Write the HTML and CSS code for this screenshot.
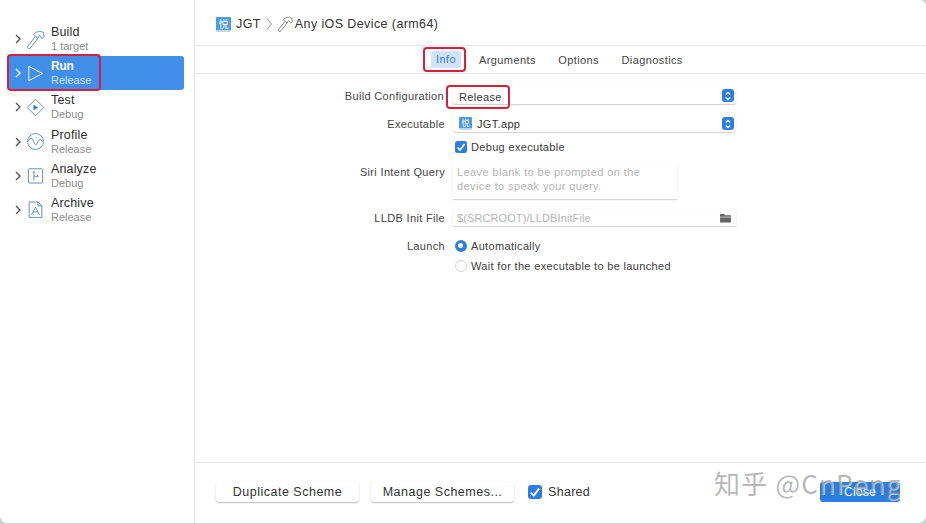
FILE: index.html
```html
<!DOCTYPE html>
<html lang="en">
<head>
<meta charset="utf-8">
<title>Scheme editor</title>
<link rel="stylesheet" href="styles.css">
</head>
<body>
<div class="sheet">
  <aside class="sidebar">
    <div class="action">
      <svg class="chev" viewBox="0 0 8 10"><path d="M2 1l4 4-4 4"/></svg>
      <svg class="aicon" viewBox="0 0 24 24"><path class="ln" d="M2 21l10-13 3 2.500L5 23.300c-1.500.7-3.500-.7-3-2.300z"/><path class="ln" d="M12 8L9.500 5.500C13 1.500 18 1 22 3l1 5.500-2.500 1.800-3.500-3.300-2 3.500"/></svg>
      <div class="atext"><div class="aname">Build</div><div class="asub">1 target</div></div>
    </div>
    <div class="action selected">
      <svg class="chev" viewBox="0 0 8 10"><path d="M2 1l4 4-4 4"/></svg>
      <svg class="aicon" viewBox="0 0 24 24"><path class="ln" d="M3.500 3L21 12 3.500 21z"/></svg>
      <div class="atext"><div class="aname">Run</div><div class="asub">Release</div></div>
    </div>
    <div class="action">
      <svg class="chev" viewBox="0 0 8 10"><path d="M2 1l4 4-4 4"/></svg>
      <svg class="aicon" viewBox="0 0 24 24"><path class="ln" d="M12 1.500L22.500 12 12 22.500 1.500 12z"/><path class="fillb" d="M9.500 8.500l6 3.500-6 3.500z"/></svg>
      <div class="atext"><div class="aname">Test</div><div class="asub">Debug</div></div>
    </div>
    <div class="action">
      <svg class="chev" viewBox="0 0 8 10"><path d="M2 1l4 4-4 4"/></svg>
      <svg class="aicon" viewBox="0 0 24 24"><circle class="ln" cx="12" cy="12" r="10"/><path class="ln" d="M2.500 12c2-3 3.500-5 5-4s2.500 7 4.500 8 3-5 4.500-6 3 .5 5 2"/></svg>
      <div class="atext"><div class="aname">Profile</div><div class="asub">Release</div></div>
    </div>
    <div class="action">
      <svg class="chev" viewBox="0 0 8 10"><path d="M2 1l4 4-4 4"/></svg>
      <svg class="aicon" viewBox="0 0 24 24"><rect class="ln" x="3" y="3.500" width="18" height="18" rx="1"/><path class="ln" d="M10 7v11M10 13h5M8.500 8.500L10 7l1.500 1.500M14 11.500l1.500 1.500-1.500 1.500"/></svg>
      <div class="atext"><div class="aname">Analyze</div><div class="asub">Debug</div></div>
    </div>
    <div class="action">
      <svg class="chev" viewBox="0 0 8 10"><path d="M2 1l4 4-4 4"/></svg>
      <svg class="aicon" viewBox="0 0 24 24"><path class="ln" d="M4 2.500h11l5 5v14.500H4z"/><path class="ln" d="M15 2.500v5h5M7 19l5-10 5 10M9 15h6"/></svg>
      <div class="atext"><div class="aname">Archive</div><div class="asub">Release</div></div>
    </div>
    <div class="mark mark-run"></div>
  </aside>

  <main class="panel">
    <header class="crumbs">
      <span class="appicon">悦</span>
      <span class="proj">JGT</span>
      <svg class="crumbsep" viewBox="0 0 8 14"><path d="M1.500 1l5 6-5 6"/></svg>
      <svg class="hammer" viewBox="0 0 24 24"><path d="M2 21l10-13 3 2.500L5 23.300c-1.500.7-3.500-.7-3-2.300z"/><path d="M12 8L9.500 5.500C13 1.500 18 1 22 3l1 5.500-2.500 1.800-3.500-3.300-2 3.500"/></svg>
      <span class="dest">Any iOS Device (arm64)</span>
    </header>

    <nav class="tabs">
      <div class="tab active">Info<div class="mark mark-tab"></div></div>
      <div class="tab">Arguments</div>
      <div class="tab">Options</div>
      <div class="tab">Diagnostics</div>
    </nav>

    <section class="form">
      <div class="row row-config">
        <label class="lbl">Build Configuration</label>
        <div class="select">
          <span class="seltext">Release</span>
          <span class="stepper"><svg viewBox="0 0 8 12"><path d="M1.800 4.500L4 2.300l2.200 2.200M1.800 7.500L4 9.700l2.200-2.200"/></svg></span>
          <div class="mark mark-config"></div>
        </div>
      </div>
      <div class="row row-exe">
        <label class="lbl">Executable</label>
        <div class="select">
          <span class="appicon small">悦</span><span class="seltext">JGT.app</span>
          <span class="stepper"><svg viewBox="0 0 8 12"><path d="M1.800 4.500L4 2.300l2.200 2.200M1.800 7.500L4 9.700l2.200-2.200"/></svg></span>
        </div>
      </div>
      <div class="row row-debug">
        <span class="check"><svg viewBox="0 0 12 12"><path d="M2.500 6.500l2.500 2.500 4.500-6"/></svg></span>
        <span>Debug executable</span>
      </div>
      <div class="row row-siri">
        <label class="lbl">Siri Intent Query</label>
        <div class="textarea">Leave blank to be prompted on the<br>device to speak your query.</div>
      </div>
      <div class="row row-lldb">
        <label class="lbl">LLDB Init File</label>
        <div class="pathfield">
          <span>$(SRCROOT)/LLDBInitFile</span>
          <svg class="folder" viewBox="0 0 14 11"><path d="M1 1h4.500l1 1.500H13V4H1z"/><path d="M1 4.800h12V10.500H1z"/></svg>
        </div>
      </div>
      <div class="row row-launch1">
        <label class="lbl">Launch</label>
        <span class="radio on"></span><span>Automatically</span>
      </div>
      <div class="row row-launch2">
        <span class="radio"></span><span>Wait for the executable to be launched</span>
      </div>
    </section>

    <footer class="foot">
      <button class="btn dup">Duplicate Scheme</button>
      <button class="btn mng">Manage Schemes...</button>
      <span class="check big"><svg viewBox="0 0 12 12"><path d="M2.500 6.500l2.500 2.500 4.500-6"/></svg></span>
      <span class="shared">Shared</span>
      <button class="close">Close</button>
      <div class="watermark">知乎 @CnPeng</div>
    </footer>
  </main>
</div>
</body>
</html>
```

FILE: styles.css
```css
* { box-sizing: border-box; }
html, body { margin: 0; padding: 0; }
body {
  width: 926px; height: 524px; overflow: hidden;
  background: #c9d6cc;
  font-family: "Liberation Sans", Arial, sans-serif;
  color: #3a3a3a;
}
.sheet {
  width: 926px; height: 523px; display: flex;
  background: #fff; border-radius: 0 6px 8px 8px; overflow: hidden;
}
.sidebar {
  width: 195px; flex: none; padding: 22px 10px 0 8px; position: relative;
  background: #fff; border-right: 1px solid #e4e4e4;
}
.action {
  height: 34px; display: flex; align-items: center; padding-left: 6px;
  border-radius: 3px; margin-bottom: 0.2px; width: 176px;
}
.action.selected { background: #418fea; color: #fff; }
.chev { width: 8px; height: 10px; flex: none; fill: none; stroke: #555; stroke-width: 1.4; }
.selected .chev { stroke: #fff; }
.aicon { width: 19px; height: 19px; margin-left: 4px; flex: none; }
.ln { fill: none; stroke: #5b8bc6; stroke-width: 1.200; }
.fillb { fill: #2f7de0; }
.selected .ln { stroke: #fff; }
.atext { margin-left: 6px; }
.aname { font-size: 12.500px; line-height: 14px; color: #2c2c2c; letter-spacing: .15px; }
.asub { font-size: 11px; line-height: 14px; color: #8c8c8c; }
.selected .aname { color: #fff; font-weight: bold; font-size: 12px; letter-spacing: -.2px; }
.selected .asub { color: #cfe3fb; }
.mark { position: absolute; border: 2px solid #d4213d; border-radius: 4px; pointer-events: none; }
.mark-run { left: 7px; top: 54px; width: 94px; height: 37px; }

.panel { flex: 1; display: flex; flex-direction: column; min-width: 0; }
.crumbs {
  height: 46px; flex: none; display: flex; align-items: center; padding: 3px 0 0 21px; gap: 4px;
  font-size: 12.500px; color: #333; border-bottom: 1px solid #e6e6e6; letter-spacing: .4px;
}
.proj { margin-left: 1px; }
.dest { margin-left: -2px; }
.appicon {
  width: 15px; height: 15px; background: #4f9be0; color: #fff; font-size: 10px; line-height: 14px;
  font-family: "Noto Sans CJK SC", sans-serif; text-align: center; flex: none; border-radius: 1px;
  border-bottom: 2px solid #bcd9f2; overflow: hidden; letter-spacing: 0;
}
.crumbsep { width: 8px; height: 14px; fill: none; stroke: #999; stroke-width: 1; }
.hammer { width: 16px; height: 16px; fill: none; stroke: #777; stroke-width: 1.300; }
.tabs {
  height: 28px; flex: none; display: flex; align-items: center; padding-left: 236px;
  font-size: 11px; color: #444; border-bottom: 1px solid #e6e6e6; letter-spacing: .4px;
}
.tab { position: relative; margin-right: 22.500px; }
.tab.active {
  color: #3a7cd6; background: #cfe3fa; border-radius: 3px; width: 30px; text-align: center; height: 17px; line-height: 17px;
  margin-right: 18px;
}
.mark-tab { left: -8px; top: -4px; width: 43px; height: 25px; }

.form { flex: 1; position: relative; font-size: 11px; color: #3c3c3c; padding-left: 150px; letter-spacing: .33px; }
.row { display: flex; align-items: center; position: relative; }
.select {
  width: 283px; height: 17px; background: #fff; border-radius: 3px; position: relative;
  box-shadow: 0 1px 1px rgba(0,0,0,.18), 0 0 1px rgba(0,0,0,.08);
  display: flex; align-items: center; padding-left: 6px;
  margin-left: 108px;
}
.row-config { margin-top: 13px; }
.row-config .seltext { padding-top: 2px; }
.row-exe { margin-top: 11px; }
.lbl { position: absolute; left: 0; width: 100px; text-align: right; white-space: nowrap; color: #444; }
.row-config .lbl { left: -1px; margin-top: 1px; }
.seltext { color: #333; }
.appicon.small { width: 13px; height: 13px; font-size: 8px; line-height: 11px; margin-right: 5px; }
.stepper {
  position: absolute; right: 2px; top: 2px; width: 12px; height: 13px; background: #2f7de0; border-radius: 3px;
  display: flex; align-items: center; justify-content: center;
}
.stepper svg { width: 8px; height: 12px; fill: none; stroke: #fff; stroke-width: 1.300; }
.mark-config { left: -7px; top: -2px; width: 64px; height: 24px; }
.row-debug { margin: 8px 0 0 110px; gap: 4px; height: 14px; }
.check {
  width: 12px; height: 12px; background: #2f7de0; border-radius: 2.500px; flex: none; display: flex;
}
.check svg { width: 12px; height: 12px; fill: none; stroke: #fff; stroke-width: 1.700; }
.row-siri { margin-top: 9px; align-items: flex-start; }
.row-siri .lbl { top: 3px; }
.textarea {
  margin-left: 108px; width: 224px; height: 36px; padding: 2px 4px; line-height: 14px; color: #b4b4b4;
  box-shadow: 0 1px 1px rgba(0,0,0,.15), 0 0 1px rgba(0,0,0,.08); font-size: 11px; letter-spacing: .4px;
}
.row-lldb { margin-top: 10px; }
.pathfield {
  margin-left: 108px; width: 283px; height: 17px; padding: 0 4px; color: #b4b4b4;
  letter-spacing: .1px;
  display: flex; align-items: center; justify-content: space-between;
  box-shadow: 0 1px 1px rgba(0,0,0,.15), 0 0 1px rgba(0,0,0,.08);
}
.folder { width: 13px; height: 10px; fill: #666; }
.row-launch1 { margin-top: 13px; height: 14px; }
.row-launch1 .radio { margin-left: 110px; }
.row-launch2 { margin: 6px 0 0 110px; height: 14px; }
.radio {
  width: 12px; height: 12px; border-radius: 50%; border: 1px solid #d8d8d8; background: #fff; margin-right: 4px; flex: none;
}
.radio.on { background: #2f7de0; border: 3.500px solid #2f7de0; position: relative; }
.radio.on::after { content: ""; position: absolute; left: 0; top: 0; width: 5px; height: 5px; border-radius: 50%; background: #fff; }

.foot {
  height: 61px; flex: none; border-top: 1px solid #e6e6e6; position: relative;
  display: flex; align-items: center; padding: 0 0 2px 21px; font-size: 12.500px;
}
.btn {
  height: 20px; background: #fff; border: 0; border-radius: 3px; font: inherit; color: #333; padding: 0; letter-spacing: .5px;
  box-shadow: 0 1px 1.500px rgba(0,0,0,.25), 0 0 1px rgba(0,0,0,.12);
}
.dup { width: 143px; margin-right: 12px; }
.mng { width: 143px; margin-right: 14px; }
.check.big { width: 14px; height: 14px; border-radius: 3px; margin-right: 6px; }
.check.big svg { width: 14px; height: 14px; }
.shared { color: #333; letter-spacing: .3px; }
.close {
  position: absolute; left: 625px; top: 19px; width: 80px; height: 20px; border: 0; border-radius: 3px;
  background: #2a7de1; color: #fff; font-family: inherit; font-size: 12.500px; padding: 0;
}
.watermark {
  position: absolute; left: 519px; top: 2px; font-family: "Noto Sans CJK SC", "Liberation Sans", sans-serif;
  font-size: 26px; line-height: 36px; color: rgba(135,135,135,.6); white-space: nowrap; letter-spacing: 1.2px;
  text-shadow: 1px 1px 0 rgba(255,255,255,.6);
}
```
